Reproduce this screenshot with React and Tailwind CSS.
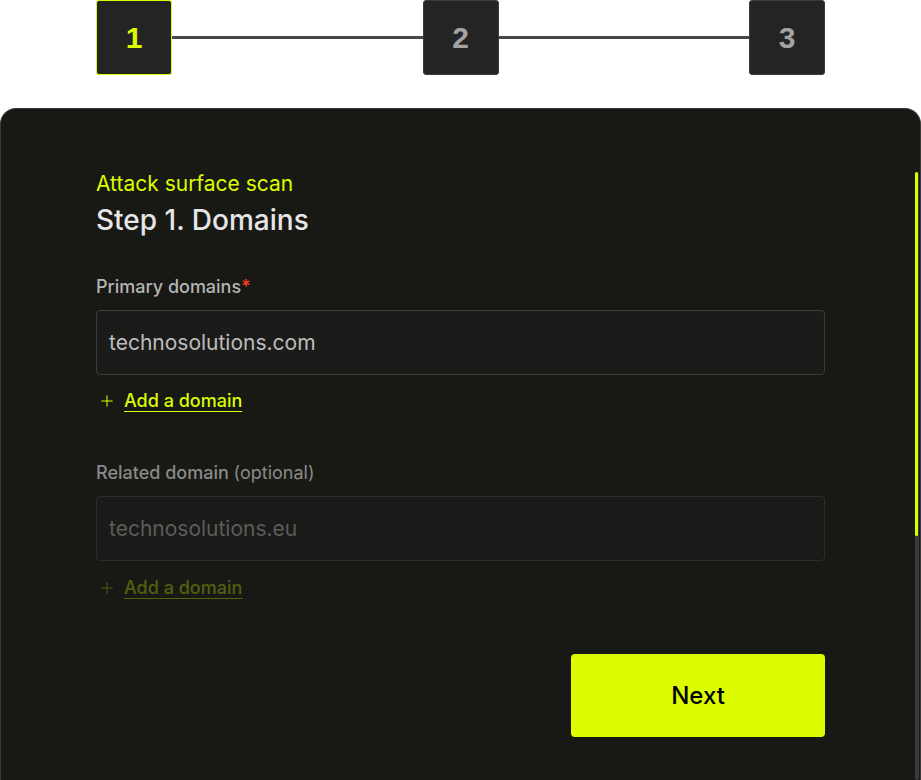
import { Plus } from 'lucide-react';

const LIME = '#dcfc00';

function StepBox({ n, active }) {
  return (
    <div
      className={`flex h-[75px] w-[76px] shrink-0 items-center justify-center rounded-[3px] border bg-[#242424] font-['Liberation_Sans',sans-serif] text-[30px] font-bold ${active ? 'border-[#dcfc00] text-[#dcfc00]' : 'border-[#3c3c3c] text-[#a3a3a3]'}`}
    >
      {n}
    </div>
  );
}

function AddLink({ dim }) {
  return (
    <div className={`flex h-6 items-center gap-[8px] pl-[2px] ${dim ? 'opacity-30' : ''}`}>
      <Plus size={18} strokeWidth={1.4} color={LIME} />
      <a href="#" className="text-[18px] font-medium leading-6 text-[#dcfc00] underline decoration-1 underline-offset-[4px]">
        Add a domain
      </a>
    </div>
  );
}

export default function App() {
  return (
    <div className="h-[780px] overflow-hidden bg-white font-['Inter',sans-serif]">
      <div className="flex items-center px-[96px]">
        <StepBox n="1" active />
        <div className="h-[3px] flex-1 bg-[#484848]" />
        <StepBox n="2" />
        <div className="h-[3px] flex-1 bg-[#484848]" />
        <StepBox n="3" />
      </div>

      <div className="relative mt-[33px] h-[672px] rounded-t-[16px] border border-b-0 border-[#3a3a38] bg-[#181815]">
        {/* scrollbar */}
        <div className="absolute right-[1px] top-[63px] bottom-0 w-[4px] rounded-full bg-[#3a3a3a]">
          <div className="h-[364px] w-[3px] rounded-full bg-[#dcfc00]" />
        </div>

        <div className="flex flex-col px-[95px] pt-[61px]">
          <p className="text-[21px] leading-7 text-[#dcfc00]">Attack surface scan</p>
          <h1 className="mt-[6px] text-[28px] font-medium leading-8 text-[#e6e6e6]">Step 1. Domains</h1>

          <label className="mt-[39px] text-[18px] font-medium leading-6 text-[#b4b4b4]">
            Primary domains<span className="text-[#ff3d1f]">*</span>
          </label>
          <div className="mt-[11px] flex h-[65px] items-center rounded-[4px] border border-[#3c3c3a] bg-[#1b1b19] px-[12px] text-[21px] text-[#bdbdbd]">
            technosolutions.com
          </div>
          <div className="mt-[14px]">
            <AddLink />
          </div>

          <label className="mt-[48px] text-[18px] font-medium leading-6 text-[#8a8a88]">
            Related domain <span className="font-normal">(optional)</span>
          </label>
          <div className="mt-[11px] flex h-[65px] items-center rounded-[4px] border border-[#2c2c2a] bg-[#1a1a18] px-[12px] text-[21px] text-[#5c5c5a]">
            technosolutions.eu
          </div>
          <div className="mt-[15px]">
            <AddLink dim />
          </div>

          <button className="mt-[54px] h-[83px] w-[254px] self-end rounded-[4px] bg-[#dcfc00] text-[24px] font-medium text-black">
            Next
          </button>
        </div>
      </div>
    </div>
  );
}
